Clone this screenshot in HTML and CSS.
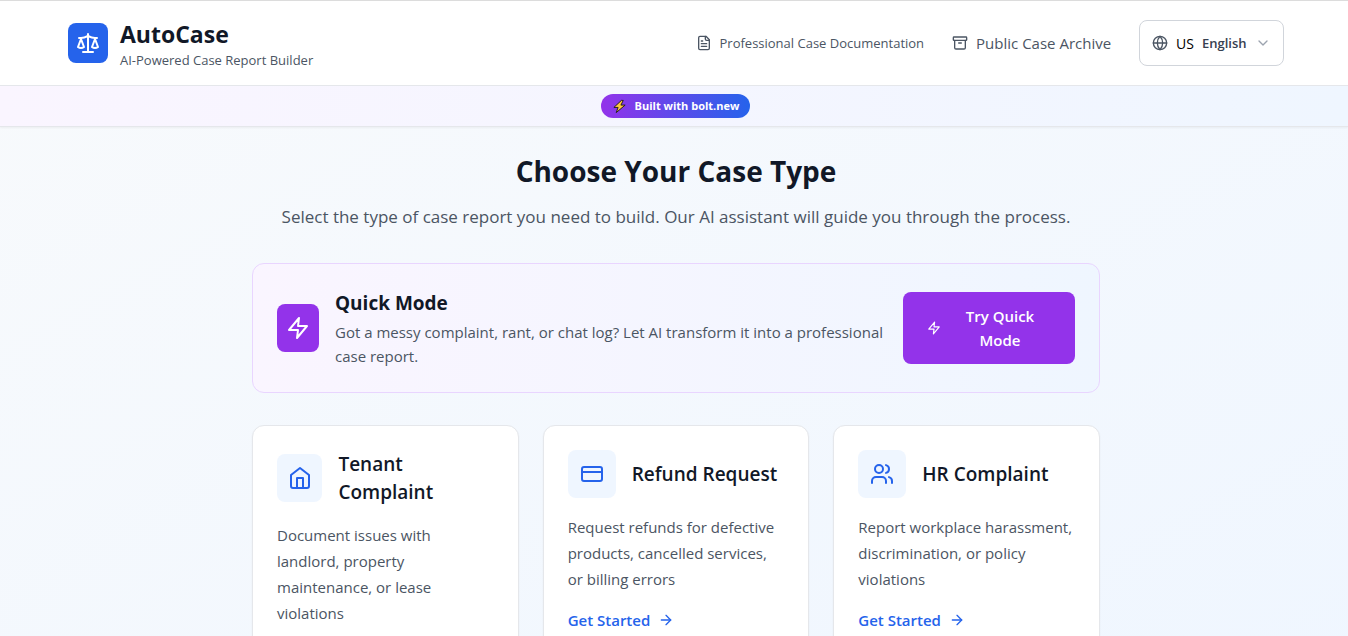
FILE: index.html
```html
<!DOCTYPE html>
<html lang="en">
<head>
  <meta charset="UTF-8" />
  <meta name="viewport" content="width=device-width, initial-scale=1.0"/>
  <title>AutoCase - AI-Powered Case Report Builder</title>
  <link rel="stylesheet" href="styles.css">
</head>
<body>
  <header class="header">
    <div class="container header-row">
      <div class="brand">
        <div class="logo">
          <svg class="icon icon-lg" viewBox="0 0 24 24"><path d="m16 16 3-8 3 8c-.87.65-1.92 1-3 1s-2.130-.35-3-1Z"/><path d="m2 16 3-8 3 8c-.87.65-1.92 1-3 1s-2.130-.35-3-1Z"/><path d="M7 21h10"/><path d="M12 3v18"/><path d="M3 7h2c2 0 5-1 7-2 2 1 5 2 7 2h2"/></svg>
        </div>
        <div>
          <div class="brand-name">AutoCase</div>
          <div class="brand-tagline">AI-Powered Case Report Builder</div>
        </div>
      </div>

      <nav class="nav">
        <div class="nav-item nav-small">
          <svg class="icon" viewBox="0 0 24 24"><path d="M15 2H6a2 2 0 0 0-2 2v16a2 2 0 0 0 2 2h12a2 2 0 0 0 2-2V7Z"/><path d="M14 2v4a2 2 0 0 0 2 2h4"/><path d="M10 9H8"/><path d="M16 13H8"/><path d="M16 17H8"/></svg>
          <span>Professional Case Documentation</span>
        </div>
        <a class="nav-item" href="#archive">
          <svg class="icon" viewBox="0 0 24 24"><rect width="20" height="5" x="2" y="3" rx="1"/><path d="M4 8v11a2 2 0 0 0 2 2h12a2 2 0 0 0 2-2V8"/><path d="M10 12h4"/></svg>
          <span>Public Case Archive</span>
        </a>
        <label class="language" for="language">
          <svg class="icon" viewBox="0 0 24 24"><circle cx="12" cy="12" r="10"/><path d="M12 2a14.500 14.500 0 0 0 0 20 14.500 14.500 0 0 0 0-20"/><path d="M2 12h20"/></svg>
          <span class="flag">US</span>
          <select id="language" aria-label="Language">
            <option value="en">English</option>
          </select>
          <svg class="icon chevron" viewBox="0 0 24 24"><path d="m6 9 6 6 6-6"/></svg>
        </label>
      </nav>
    </div>
  </header>

  <div class="banner">
    <a class="bolt-badge" href="#bolt">
      <svg class="bolt-emoji" viewBox="0 0 16 16"><path d="M10 1.500 2 9h4.500L4.500 14.500 14 6.500H9.500L12 1.500Z"/></svg>
      <span>Built with bolt.new</span>
    </a>
  </div>

  <main class="main">
    <div class="intro">
      <h1>Choose Your Case Type</h1>
      <p>Select the type of case report you need to build. Our AI assistant will guide you through the process.</p>
    </div>

    <section class="quick">
      <div class="quick-icon">
        <svg class="icon icon-lg" viewBox="0 0 24 24"><path d="M13 2 3 14h9l-1 8 10-12h-9l1-8z"/></svg>
      </div>
      <div class="quick-text">
        <h2>Quick Mode</h2>
        <p>Got a messy complaint, rant, or chat log? Let AI transform it into a professional case report.</p>
      </div>
      <button class="quick-btn" type="button">
        <svg class="icon" viewBox="0 0 24 24"><path d="M13 2 3 14h9l-1 8 10-12h-9l1-8z"/></svg>
        <span>Try Quick Mode</span>
      </button>
    </section>

    <div class="cards">
      <article class="card">
        <div class="card-head">
          <div class="card-icon">
            <svg class="icon icon-lg" viewBox="0 0 24 24"><path d="m3 9 9-7 9 7v11a2 2 0 0 1-2 2H5a2 2 0 0 1-2-2z"/><path d="M9 22V12h6v10"/></svg>
          </div>
          <h3>Tenant Complaint</h3>
        </div>
        <p>Document issues with landlord, property maintenance, or lease violations</p>
        <a class="card-link" href="#tenant">Get Started
          <svg class="icon" viewBox="0 0 24 24"><path d="M5 12h14"/><path d="m12 5 7 7-7 7"/></svg>
        </a>
      </article>

      <article class="card">
        <div class="card-head">
          <div class="card-icon">
            <svg class="icon icon-lg" viewBox="0 0 24 24"><rect width="20" height="14" x="2" y="5" rx="2"/><path d="M2 10h20"/></svg>
          </div>
          <h3>Refund Request</h3>
        </div>
        <p>Request refunds for defective products, cancelled services, or billing errors</p>
        <a class="card-link" href="#refund">Get Started
          <svg class="icon" viewBox="0 0 24 24"><path d="M5 12h14"/><path d="m12 5 7 7-7 7"/></svg>
        </a>
      </article>

      <article class="card">
        <div class="card-head">
          <div class="card-icon">
            <svg class="icon icon-lg" viewBox="0 0 24 24"><path d="M16 21v-2a4 4 0 0 0-4-4H6a4 4 0 0 0-4 4v2"/><circle cx="9" cy="7" r="4"/><path d="M22 21v-2a4 4 0 0 0-3-3.870"/><path d="M16 3.130a4 4 0 0 1 0 7.750"/></svg>
          </div>
          <h3>HR Complaint</h3>
        </div>
        <p>Report workplace harassment, discrimination, or policy violations</p>
        <a class="card-link" href="#hr">Get Started
          <svg class="icon" viewBox="0 0 24 24"><path d="M5 12h14"/><path d="m12 5 7 7-7 7"/></svg>
        </a>
      </article>
    </div>
  </main>
</body>
</html>
```
FILE: styles.css
```css
:root {
  --text: #111827;
  --muted: #4b5563;
  --border: #e5e7eb;
  --blue: #2563eb;
  --blue-light: #eff6ff;
  --purple: #9333ea;
  --purple-light: #faf5ff;
}

* {
  box-sizing: border-box;
}

body {
  margin: 0;
  min-height: 100vh;
  font-family: 'Segoe UI', 'Open Sans', sans-serif;
  font-size: 15px;
  line-height: 24px;
  color: var(--text);
  background: linear-gradient(to bottom right, #f8fafc, #eff6ff);
}

h1, h2, h3, p {
  margin: 0;
}

a {
  color: inherit;
  text-decoration: none;
}

.icon {
  width: 16px;
  height: 16px;
  fill: none;
  stroke: currentColor;
  stroke-width: 2;
  stroke-linecap: round;
  stroke-linejoin: round;
}

.icon-lg {
  width: 24px;
  height: 24px;
}

/* Header */
.header {
  background: #fff;
  border-top: 1px solid #dcdcdc;
  border-bottom: 1px solid var(--border);
}

.container {
  max-width: 1280px;
  margin: 0 auto;
  padding: 16px 30px 16px 34px;
}

.header-row {
  display: flex;
  align-items: center;
  justify-content: space-between;
}

.brand {
  display: flex;
  align-items: center;
  gap: 12px;
}

.logo {
  display: flex;
  padding: 8px;
  border-radius: 8px;
  background: var(--blue);
  color: #fff;
}

.brand-name {
  font-size: 23px;
  line-height: 34px;
  font-weight: 700;
}

.brand-tagline {
  font-size: 13px;
  line-height: 18px;
  color: var(--muted);
}

.nav {
  display: flex;
  align-items: center;
  gap: 28px;
  margin: -4px 0;
}

.nav-item {
  display: flex;
  align-items: center;
  gap: 8px;
  color: var(--muted);
}

.nav-small {
  font-size: 13px;
  line-height: 20px;
}

.language {
  display: flex;
  align-items: center;
  gap: 8px;
  height: 46px;
  padding: 0 12px;
  border: 1px solid #d1d5db;
  border-radius: 8px;
  background: #fff;
  color: var(--muted);
}

.flag {
  padding-top: 2px;
  font-size: 14px;
  color: #000;
}

.language select {
  appearance: none;
  padding: 0;
  border: none;
  background: none;
  font: 600 13px 'Segoe UI', 'Open Sans', sans-serif;
  color: #374151;
}

.chevron {
  color: #9ca3af;
}

/* Banner */
.banner {
  display: flex;
  justify-content: center;
  padding: 8px 0 8px 3px;
  background: linear-gradient(to right, var(--purple-light), var(--blue-light));
  border-bottom: 1px solid var(--border);
  box-shadow: 0 1px 2px rgba(0, 0, 0, 0.05);
}

.bolt-badge {
  display: flex;
  align-items: center;
  gap: 8px;
  padding: 4px 11px;
  border-radius: 12px;
  background: linear-gradient(to right, var(--purple), var(--blue));
  color: #fff;
  font-size: 11px;
  line-height: 16px;
  font-weight: 700;
}

.bolt-emoji {
  width: 15px;
  height: 15px;
  fill: #ffc83d;
  stroke: #1f1a17;
  stroke-width: 1;
  stroke-linejoin: round;
}

/* Main */
.main {
  max-width: 896px;
  margin: 0 auto;
  padding: 26px 22px 32px 26px;
}

.intro {
  margin-bottom: 32px;
  text-align: center;
}

.intro h1 {
  margin-bottom: 14px;
  font-size: 28px;
  line-height: 36px;
}

.intro p {
  font-size: 17px;
  line-height: 28px;
  color: var(--muted);
}

.quick {
  display: flex;
  align-items: center;
  margin-bottom: 32px;
  padding: 24px;
  border: 1px solid #e9d5ff;
  border-radius: 12px;
  background: linear-gradient(to right, var(--purple-light), var(--blue-light));
}

.quick-icon {
  display: flex;
  flex: none;
  align-items: center;
  justify-content: center;
  width: 42px;
  height: 48px;
  margin-right: 16px;
  border-radius: 8px;
  background: var(--purple);
  color: #fff;
}

.quick-text {
  flex: 1;
}

.quick-text h2 {
  margin-bottom: 2px;
  font-size: 19px;
  line-height: 30px;
}

.quick-text p {
  color: var(--muted);
}

.quick-btn {
  display: flex;
  flex: none;
  align-items: center;
  gap: 8px;
  width: 172px;
  padding: 12px 24px;
  border: none;
  border-radius: 8px;
  background: var(--purple);
  color: #fff;
  font: inherit;
  font-weight: 600;
  cursor: pointer;
}

.quick-btn .icon {
  flex: none;
  width: 14px;
}

.quick-btn span {
  flex: 1;
  padding: 0 12px;
}

.cards {
  display: grid;
  grid-template-columns: repeat(3, 1fr);
  gap: 24px;
}

.card {
  padding: 24px;
  border: 1px solid var(--border);
  border-radius: 12px;
  background: #fff;
  box-shadow: 0 1px 2px rgba(0, 0, 0, 0.05);
}

.card-head {
  display: flex;
  align-items: center;
  gap: 16px;
  margin-bottom: 16px;
}

.card-icon {
  display: flex;
  align-items: center;
  justify-content: center;
  width: 48px;
  height: 48px;
  border-radius: 8px;
  background: var(--blue-light);
  color: var(--blue);
}

.card h3 {
  font-size: 19px;
  line-height: 28px;
  font-weight: 600;
}

.card p {
  margin-bottom: 16px;
  line-height: 26px;
  color: var(--muted);
}

.card-link {
  display: flex;
  align-items: center;
  gap: 8px;
  color: var(--blue);
  font-weight: 600;
}
```
